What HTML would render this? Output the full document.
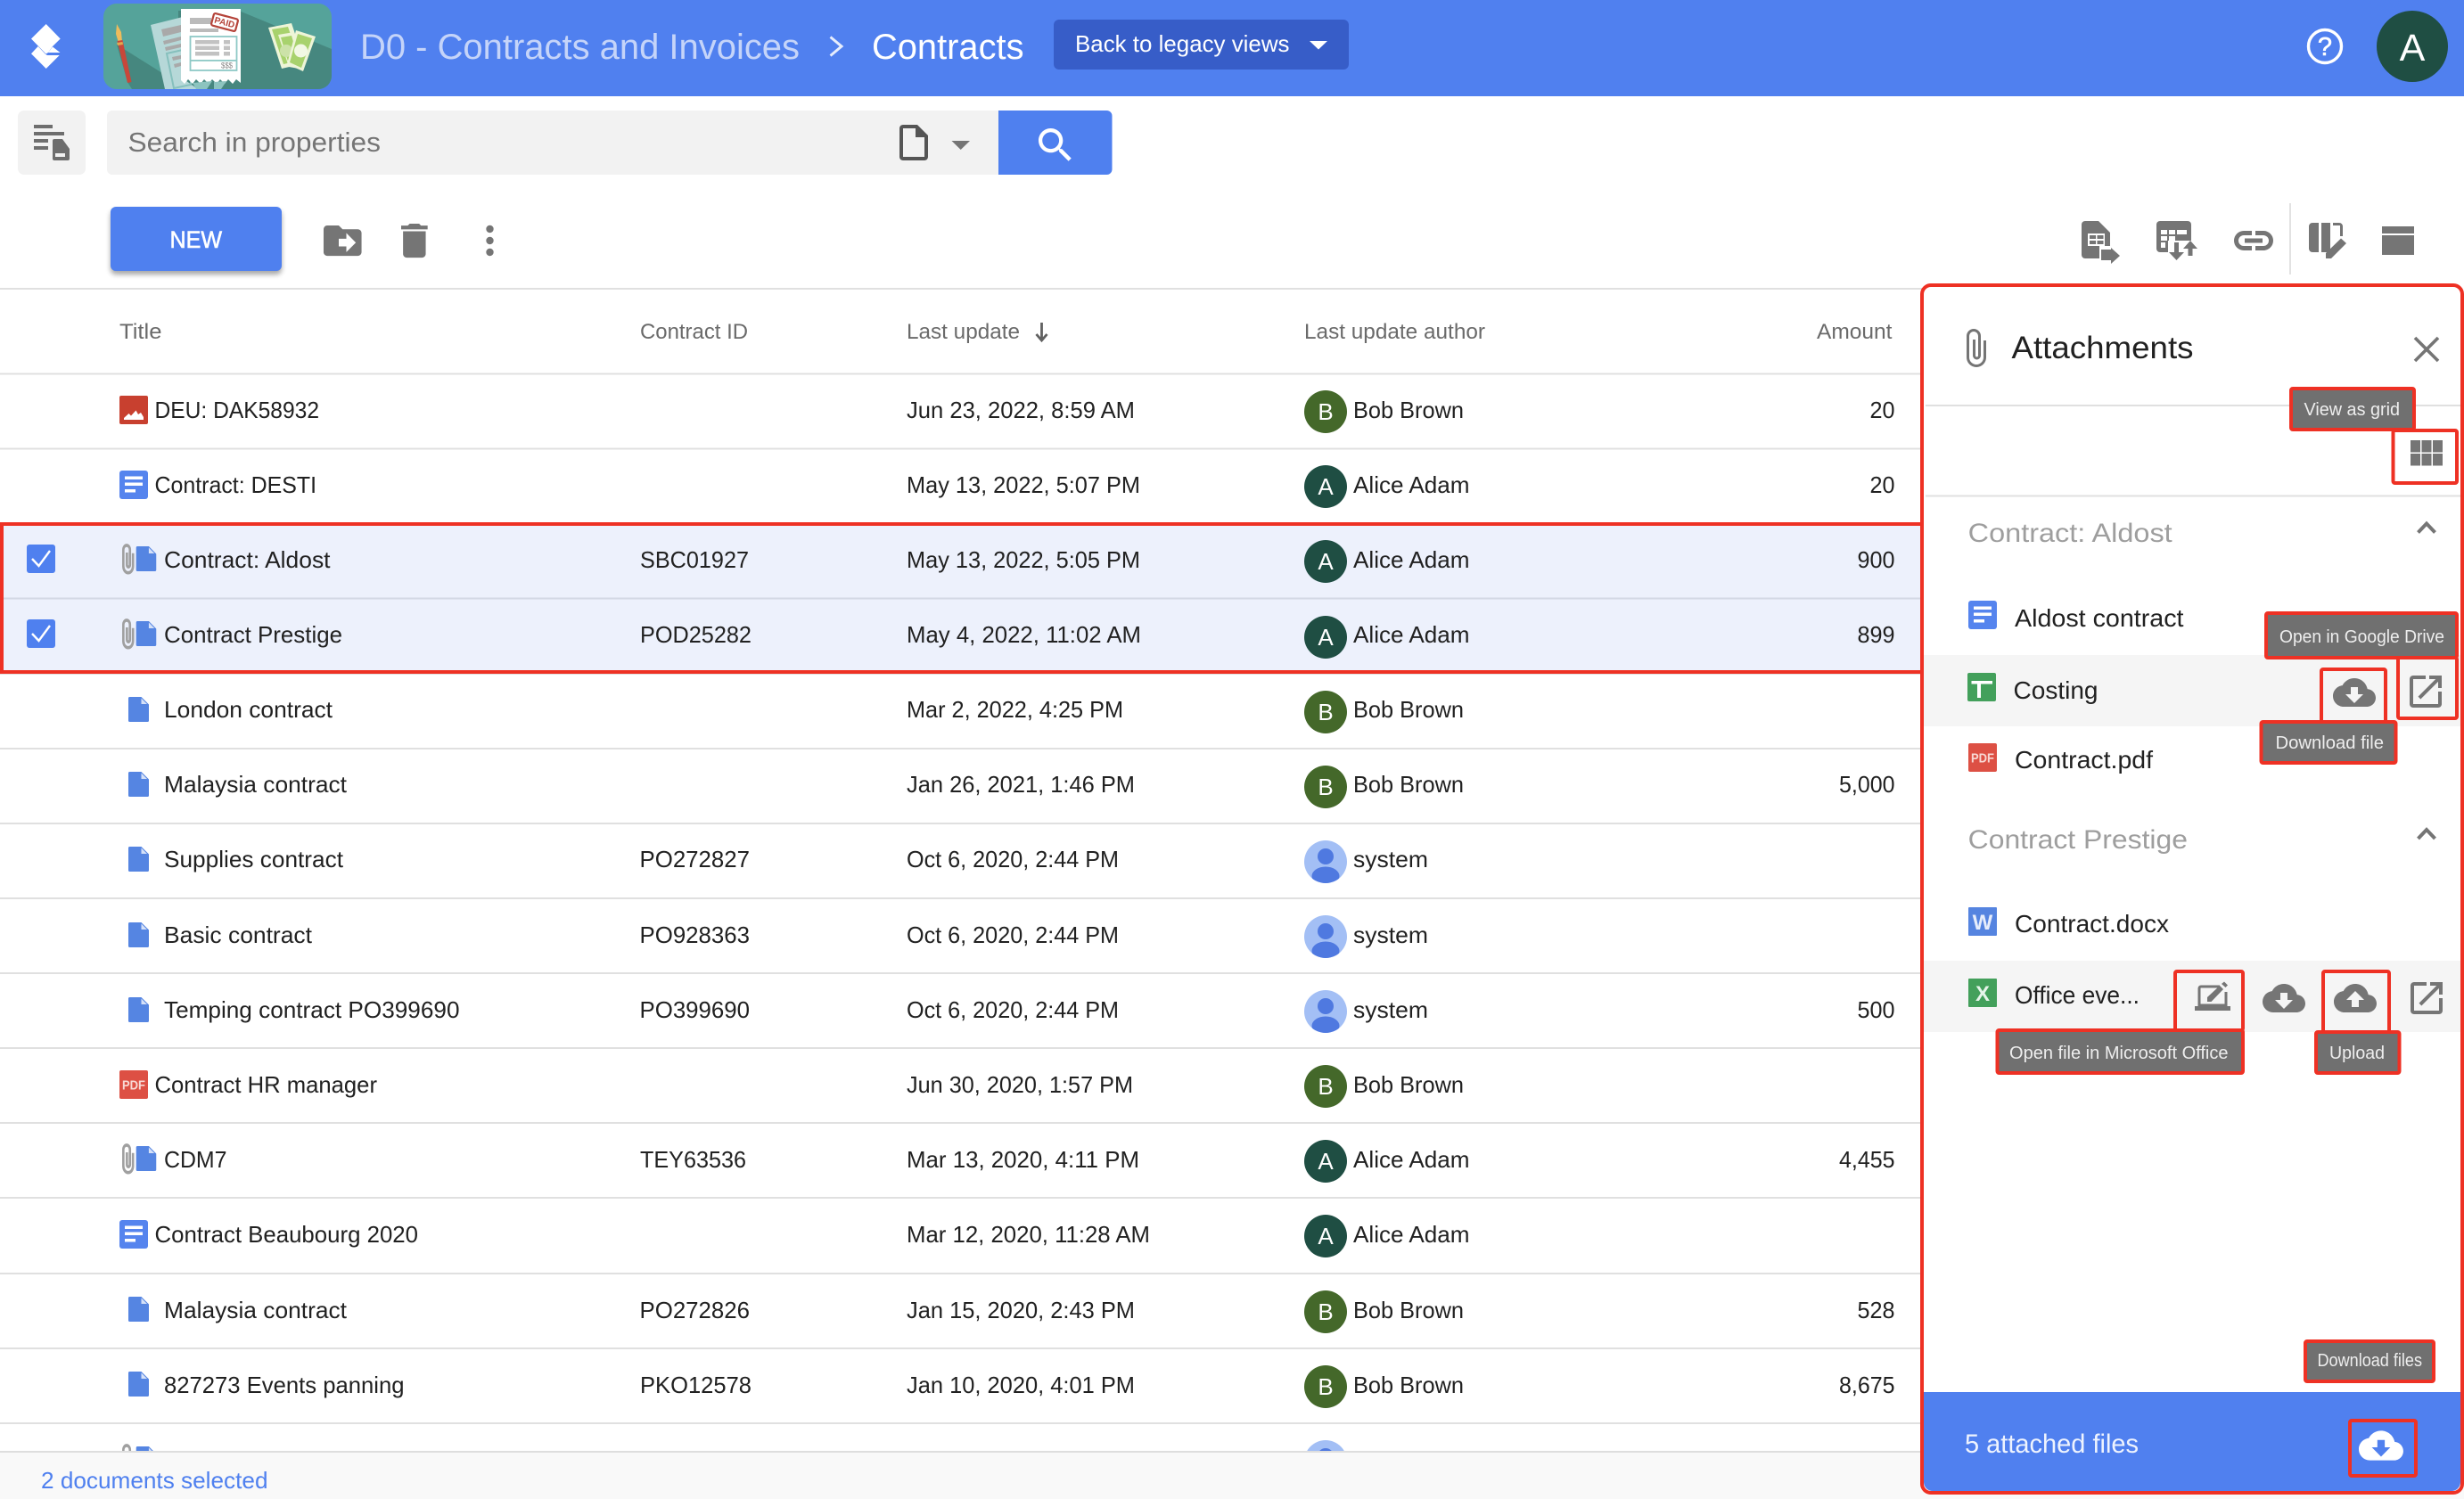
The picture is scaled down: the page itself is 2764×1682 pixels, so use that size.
<!DOCTYPE html>
<html lang="en">
<head>
<meta charset="utf-8">
<title>Contracts</title>
<style>
html,body{margin:0;padding:0;background:#fff;width:2764px;height:1682px;overflow:hidden}
svg{display:block;font-family:"Liberation Sans",Arial,sans-serif}
.t{font-size:26px;fill:#212121}
.h{font-size:24px;fill:#6a6a6a}
.av{font-size:26px;fill:#fff;text-anchor:middle}
.tt{font-size:20.5px;fill:#eee}
.p{font-size:28px;fill:#212121}
.g{font-size:30px;fill:#9e9e9e}
.rb{fill:none;stroke:#ee3124;stroke-width:4}
.tb{fill:#707070;stroke:#ee3124;stroke-width:4}
.ic{fill:#757575}
</style>
</head>
<body>
<svg width="2764" height="1682" viewBox="0 0 2764 1682" xmlns="http://www.w3.org/2000/svg">
<defs>
<filter id="bl" x="-10%" y="-20%" width="120%" height="150%"><feGaussianBlur stdDeviation="3"/></filter>
<clipPath id="lg"><rect x="116" y="4" width="256" height="96" rx="15"/></clipPath>
<clipPath id="sysc"><circle cx="24" cy="24" r="24"/></clipPath>
<g id="doc"><path d="M0 1.500a1.500 1.500 0 0 1 1.500-1.500H14.500L23 8.500V26.500a1.500 1.500 0 0 1-1.500 1.500H1.500A1.500 1.500 0 0 1 0 26.500z" fill="#5585e2"/><path d="M14.500 1.500V8H21z" fill="#d5e1f8"/></g>
<g id="clipdoc"><g transform="scale(.57 .77)"><path d="M20.500 14V33a9.500 9.500 0 0 1-19 0V9a6.500 6.500 0 0 1 13 0V31a3 3 0 0 1-6 0V13" fill="none" stroke="#a0a0a0" stroke-width="4.600"/></g><use href="#doc" x="14.500" y="3" transform="translate(1 0) scale(.98 1)"/></g>
<g id="gdoc"><rect width="32" height="32" rx="3" fill="#5584ee"/><rect x="6" y="6.500" width="20" height="3.500" fill="#fff"/><rect x="6" y="13.500" width="20" height="3.500" fill="#fff"/><rect x="6" y="21" width="12" height="3.500" fill="#fff"/></g>
<g id="sys"><circle cx="24" cy="24" r="24" fill="#a3bff5"/><g clip-path="url(#sysc)"><circle cx="24" cy="18" r="9" fill="#4f79e0"/><ellipse cx="24" cy="40" rx="15.500" ry="10.500" fill="#4f79e0"/></g></g>
<path id="cdl" d="M19.35 10.04C18.67 6.59 15.64 4 12 4 9.11 4 6.6 5.64 5.35 8.04 2.34 8.36 0 10.91 0 14c0 3.31 2.69 6 6 6h13c2.76 0 5-2.24 5-5 0-2.64-2.05-4.78-4.65-4.96zM17 13l-5 5-5-5h3V9h4v4h3z"/>
<path id="cul" d="M19.35 10.04C18.67 6.59 15.64 4 12 4 9.11 4 6.6 5.64 5.35 8.04 2.34 8.36 0 10.91 0 14c0 3.31 2.69 6 6 6h13c2.76 0 5-2.24 5-5 0-2.64-2.05-4.78-4.65-4.96zM14 13v4h-4v-4H7l5-5 5 5h-3z"/>
<path id="ext" d="M19 19H5V5h7V3H5c-1.11 0-2 .9-2 2v14c0 1.1.89 2 2 2h14c1.1 0 2-.9 2-2v-7h-2v7zM14 3v2h3.59l-9.83 9.83 1.41 1.41L19 6.41V10h2V3h-7z"/>
</defs>

<rect width="2764" height="1682" fill="#fff"/>

<!-- header -->
<rect width="2764" height="108" fill="#5080ef"/>
<path d="M51.700 27L67.700 43.500 59 52 54 59 51.500 60.500 35 43.500z" fill="#fff"/>
<path d="M59 52.500L67.500 59H54z" fill="#fff"/>
<path d="M42.700 52L51 60.800 53 62H66.700L51.700 77 35 60.300z" fill="#fff"/>

<g clip-path="url(#lg)">
<rect x="116" y="4" width="256" height="96" fill="#55a39a"/>
<path d="M268 12L372 55V100H200V12z" fill="#46877f"/>
<path d="M131 50L182 82 186 100H148L143 92z" fill="#46877f"/>
<path d="M169 28L205 19V88L222 100H185z" fill="#b6d8d8"/>
<path d="M181 33L203 28V36L183 41z" fill="#a9a9a9"/>
<path d="M183 46L203 41V45L184 50z" fill="#a9a9a9"/>
<path d="M185 53L203 49V53L186 57z" fill="#a9a9a9"/>
<path d="M187 60L214 54 214 95 195 99z" fill="none" stroke="#86c0bd" stroke-width="2"/>
<path d="M193 64L203 62V66L194 68zM195 72L203 70V74L196 76z" fill="#a9a9a9"/>
<path d="M203 10H270V93L265 89 261 94 256 89 252 94 247 89 243 94 238 89 234 94 229 89 225 94 220 89 216 94 211 89 207 94 203 90z" fill="#fff"/>
<path d="M216 93L238 91 232 100H220zM240 92L254 91 248 100H240z" fill="#8cc4bf"/>
<rect x="213" y="20" width="24" height="7" fill="#bbb"/>
<rect x="213" y="32" width="32" height="4" fill="#bbb"/>
<rect x="213.500" y="41" width="52" height="38" fill="none" stroke="#8ec9c6" stroke-width="1.800"/>
<rect x="213.500" y="67" width="52" height="1.800" fill="#8ec9c6"/>
<rect x="219" y="45" width="27" height="4.500" fill="#c2c2c2"/><rect x="219" y="51.500" width="27" height="4.500" fill="#c2c2c2"/><rect x="219" y="58" width="27" height="4.500" fill="#c2c2c2"/>
<rect x="251" y="45" width="7" height="4.500" fill="#c2c2c2"/><rect x="251" y="51.500" width="7" height="4.500" fill="#c2c2c2"/><rect x="251" y="58" width="7" height="4.500" fill="#c2c2c2"/>
<text x="248" y="76.500" font-size="9" fill="#888" textLength="13" lengthAdjust="spacingAndGlyphs">$$$</text>
<g transform="rotate(15 252 25)"><rect x="238" y="18" width="28" height="14" rx="2" fill="#fff" stroke="#b5443a" stroke-width="2.200"/><text x="252" y="28.500" font-size="10" font-weight="bold" fill="#b5443a" text-anchor="middle">PAID</text></g>
<path d="M131 27L136 36 137 47 133 48 130 38z" fill="#eebb5c"/>
<path d="M131.500 46L137.500 45 147.500 92 143 93z" fill="#c8473a"/>
<path d="M131 48L137.500 47 138 50 132 51z" fill="#e2a84e"/>
<path d="M301 31L327 26 342 71 316 77z" fill="#eef5d8"/>
<path d="M305 33L323 30 336 68 318 72z" fill="#a8d26d"/>
<path d="M312 39L330 36 341 78 324 75z" fill="#eef5d8"/>
<path d="M315 42L327 40 337 74 324 72z" fill="#a8d26d"/>
<circle cx="321" cy="57" r="7" fill="#cce2a8"/>
<path d="M332 34L354 41 340 80 322 72z" fill="#eef5d8"/>
<path d="M334 38L350 43 338 76 325 70z" fill="#a8d26d"/>
<circle cx="337.500" cy="57" r="7.500" fill="#f2f8e4"/>
</g>

<text x="404" y="66" font-size="40" fill="#c5d4f9" textLength="493" lengthAdjust="spacingAndGlyphs">D0 - Contracts and Invoices</text>
<path d="M931.500 41.500L944 52 931.500 62.500" fill="none" stroke="#e6edfc" stroke-width="3"/>
<text x="978" y="66" font-size="40" fill="#fff" textLength="170.500" lengthAdjust="spacingAndGlyphs">Contracts</text>
<rect x="1182" y="22" width="331" height="56" rx="6" fill="#375dc8"/>
<text x="1206" y="58" font-size="26" fill="#fff" textLength="240.500" lengthAdjust="spacingAndGlyphs">Back to legacy views</text>
<path d="M1469 46H1489L1479 55.500z" fill="#fff"/>
<circle cx="2608" cy="52" r="18.500" fill="none" stroke="#fff" stroke-width="3.400"/>
<text x="2608" y="62" font-size="29" fill="#fff" stroke="#fff" stroke-width=".6" text-anchor="middle">?</text>
<circle cx="2706" cy="52" r="40" fill="#1f4e43"/>
<text x="2706" y="68" font-size="43" fill="#fff" text-anchor="middle">A</text>

<!-- search row -->
<rect x="20" y="124" width="76" height="72" rx="7" fill="#f2f2f2"/>
<g fill="#6e6e6e">
<rect x="38" y="140" width="21" height="4"/><rect x="38" y="148" width="34" height="4"/><rect x="38" y="156" width="16" height="4"/><rect x="38" y="164" width="16" height="4"/>
<path d="M59 158a2 2 0 0 1 2-2H70L78 167V178a2 2 0 0 1-2 2H61a2 2 0 0 1-2-2z"/>
</g>
<rect x="62" y="172" width="11" height="4" fill="#f2f2f2"/>
<path d="M126 124H1120V196H126a6 6 0 0 1-6-6V130a6 6 0 0 1 6-6z" fill="#f2f2f2"/>
<text x="143.500" y="170" font-size="31" fill="#757575" textLength="283.500" lengthAdjust="spacingAndGlyphs">Search in properties</text>
<path transform="translate(1001 136) scale(2)" fill="#555" d="M14 2H6c-1.100 0-1.990.9-1.990 2L4 20c0 1.100.89 2 1.990 2H18c1.100 0 2-.9 2-2V8l-6-6zm4 18H6V4h7v5h5v11z"/>
<path d="M1067.500 158H1088L1077.700 168z" fill="#757575"/>
<path d="M1120 124H1241.500a6 6 0 0 1 6 6V190a6 6 0 0 1-6 6H1120z" fill="#4f80ef"/>
<path transform="translate(1158.700 137.700) scale(2.100)" fill="#fff" d="M15.500 14h-.79l-.28-.27C15.410 12.590 16 11.110 16 9.500 16 5.910 13.090 3 9.500 3S3 5.910 3 9.500 5.910 16 9.500 16c1.610 0 3.090-.59 4.230-1.570l.27.28v.79l5 4.990L20.490 19l-4.990-5zm-6 0C7.010 14 5 11.990 5 9.500S7.010 5 9.500 5 14 7.010 14 9.500 11.990 14 9.500 14z"/>

<!-- toolbar -->
<rect x="124" y="236" width="192" height="72" rx="6" fill="#000" opacity=".35" filter="url(#bl)"/>
<rect x="124" y="232" width="192" height="72" rx="6" fill="#4f80ef"/>
<text x="190.500" y="278" font-size="27" fill="#fff" stroke="#fff" stroke-width=".6" textLength="58.500" lengthAdjust="spacingAndGlyphs">NEW</text>
<path class="ic" transform="translate(358.700 244.500) scale(2.130)" d="M20 6h-8l-2-2H4c-1.100 0-1.990.9-1.990 2L2 18c0 1.100.9 2 2 2h16c1.100 0 2-.9 2-2V8c0-1.100-.9-2-2-2zm-6 12v-3h-4v-4h4V8l5 5-5 5z"/>
<path class="ic" transform="translate(439.400 244.600) scale(2.120)" d="M6 19c0 1.100.9 2 2 2h8c1.100 0 2-.9 2-2V7H6v12zM19 4h-3.500l-1-1h-5l-1 1H5v2h14V4z"/>
<circle class="ic" cx="549.500" cy="257" r="4.200"/><circle class="ic" cx="549.500" cy="270" r="4.200"/><circle class="ic" cx="549.500" cy="283" r="4.200"/>

<!-- right toolbar -->
<path class="ic" d="M2335 252a4 4 0 0 1 4-4H2354L2367 261V286a4 4 0 0 1-4 4H2339a4 4 0 0 1-4-4z"/>
<rect x="2342" y="262" width="19" height="14" fill="#fff"/>
<path class="ic" d="M2344 264h7v4h-7zM2352.500 264h7v4h-7zM2344 270h7v4h-7zM2352.500 270h7v4h-7z"/>
<path d="M2355 276H2367V272L2380 287 2367 298V292H2355z" fill="#fff"/>
<path class="ic" d="M2357 280H2368V278L2378 287 2368 296V292H2357z"/>
<rect class="ic" x="2419" y="248" width="39" height="35" rx="4"/>
<path fill="#fff" d="M2424 258h7v5h-7zM2433 258h7v5h-7zM2442 258h11v5h-11zM2424 265h7v5h-7zM2433 265h7v5h-7zM2424 272h5v6h-5z"/>
<path d="M2432 270H2468V292H2432z" fill="#fff"/>
<path class="ic" d="M2439 272H2444V283H2450L2441.500 292 2433 283H2439zM2449 279L2457 270 2465 279H2459.500V287H2454.500V279z"/>
<path class="ic" d="M2517 259H2526V264H2517a6 6 0 0 0 0 12H2526V281H2517a11 11 0 0 1 0-22zM2530 259H2539a11 11 0 0 1 0 22H2530V276H2539a6 6 0 0 0 0-12H2530zM2518 267.500H2538V272.500H2518z"/>
<rect x="2568" y="228" width="2" height="80" fill="#e2e2e2"/>
<path class="ic" d="M2594 250H2601V283H2594a4 4 0 0 1-4-4V254a4 4 0 0 1 4-4zM2604 250H2614V283H2604zM2617 250H2624a4 4 0 0 1 4 4V265H2625V253H2617z"/>
<path class="ic" d="M2609 284L2626 267.500 2632 273 2615 290H2609z"/>
<rect class="ic" x="2672" y="254" width="36" height="32"/>
<rect x="2672" y="262" width="36" height="2" fill="#fff"/>

<rect x="0" y="323" width="2160" height="2" fill="#e0e0e0"/>

<!-- table header -->
<text class="h" x="134" y="380" textLength="47.500" lengthAdjust="spacingAndGlyphs">Title</text>
<text class="h" x="718" y="380" textLength="121" lengthAdjust="spacingAndGlyphs">Contract ID</text>
<text class="h" x="1017" y="380" textLength="127" lengthAdjust="spacingAndGlyphs">Last update</text>
<path d="M1168.500 362V381M1162.500 375L1168.500 382 1174.500 375" fill="none" stroke="#616161" stroke-width="2.800"/>
<text class="h" x="1463" y="380" textLength="203" lengthAdjust="spacingAndGlyphs">Last update author</text>
<text class="h" x="2038" y="380" textLength="84.500" lengthAdjust="spacingAndGlyphs">Amount</text>

<!-- selection background -->
<rect x="0" y="588" width="2156" height="166" fill="#edf1fc"/>

<!-- row lines -->
<g fill="#e0e0e0">
<rect y="418.500" width="2156" height="2"/><rect y="502.500" width="2156" height="2"/><rect y="755" width="2156" height="2"/><rect y="839" width="2156" height="2"/><rect y="923" width="2156" height="2"/><rect y="1007" width="2156" height="2"/><rect y="1091" width="2156" height="2"/><rect y="1175" width="2156" height="2"/><rect y="1259" width="2156" height="2"/><rect y="1343" width="2156" height="2"/><rect y="1428" width="2156" height="2"/><rect y="1512" width="2156" height="2"/><rect y="1596" width="2156" height="2"/>
</g>
<rect y="670.500" width="2156" height="2" fill="#d3d8e4"/>

<!-- row 0 -->
<rect x="134" y="444" width="32" height="32" rx="2" fill="#c8402f"/>
<path transform="translate(134 444)" d="M5 27V25L10.500 20 13 22.500 18.500 16.500 21 21 24 19 27 24V27z" fill="#fff"/>
<text class="t" x="173.500" y="469" textLength="184.500" lengthAdjust="spacingAndGlyphs">DEU: DAK58932</text>
<text class="t" x="1017" y="469" textLength="256" lengthAdjust="spacingAndGlyphs">Jun 23, 2022, 8:59 AM</text>
<circle cx="1487" cy="462" r="24" fill="#44682a"/><text class="av" x="1487" y="471">B</text>
<text class="t" x="1518" y="469" textLength="124" lengthAdjust="spacingAndGlyphs">Bob Brown</text>
<text class="t" x="2097.500" y="469" textLength="28" lengthAdjust="spacingAndGlyphs">20</text>

<!-- row 1 -->
<use href="#gdoc" x="134" y="528"/>
<text class="t" x="173.500" y="553" textLength="181.500" lengthAdjust="spacingAndGlyphs">Contract: DESTI</text>
<text class="t" x="1017" y="553" textLength="262" lengthAdjust="spacingAndGlyphs">May 13, 2022, 5:07 PM</text>
<circle cx="1487" cy="546" r="24" fill="#1f4e43"/><text class="av" x="1487" y="555">A</text>
<text class="t" x="1518" y="553" textLength="130.500" lengthAdjust="spacingAndGlyphs">Alice Adam</text>
<text class="t" x="2097.500" y="553" textLength="28" lengthAdjust="spacingAndGlyphs">20</text>

<!-- row 2 -->
<rect x="30" y="611" width="32" height="32" rx="3" fill="#4f80ef"/>
<path d="M36 627L43.500 635 56 618" fill="none" stroke="#fff" stroke-width="2.400"/>
<use href="#clipdoc" x="137.500" y="610"/>
<text class="t" x="184" y="637" textLength="186.500" lengthAdjust="spacingAndGlyphs">Contract: Aldost</text>
<text class="t" x="718" y="637" textLength="122" lengthAdjust="spacingAndGlyphs">SBC01927</text>
<text class="t" x="1017" y="637" textLength="262" lengthAdjust="spacingAndGlyphs">May 13, 2022, 5:05 PM</text>
<circle cx="1487" cy="630" r="24" fill="#1f4e43"/><text class="av" x="1487" y="639">A</text>
<text class="t" x="1518" y="637" textLength="130.500" lengthAdjust="spacingAndGlyphs">Alice Adam</text>
<text class="t" x="2083.500" y="637" textLength="42" lengthAdjust="spacingAndGlyphs">900</text>

<!-- row 3 -->
<rect x="30" y="695" width="32" height="32" rx="3" fill="#4f80ef"/>
<path d="M36 711L43.500 719 56 702" fill="none" stroke="#fff" stroke-width="2.400"/>
<use href="#clipdoc" x="137.500" y="694"/>
<text class="t" x="184" y="721" textLength="200" lengthAdjust="spacingAndGlyphs">Contract Prestige</text>
<text class="t" x="718" y="721" textLength="125" lengthAdjust="spacingAndGlyphs">POD25282</text>
<text class="t" x="1017" y="721" textLength="263" lengthAdjust="spacingAndGlyphs">May 4, 2022, 11:02 AM</text>
<circle cx="1487" cy="715" r="24" fill="#1f4e43"/><text class="av" x="1487" y="724">A</text>
<text class="t" x="1518" y="721" textLength="130.500" lengthAdjust="spacingAndGlyphs">Alice Adam</text>
<text class="t" x="2083.500" y="721" textLength="42" lengthAdjust="spacingAndGlyphs">899</text>

<!-- row 4 -->
<use href="#doc" x="144" y="782"/>
<text class="t" x="184" y="805" textLength="189" lengthAdjust="spacingAndGlyphs">London contract</text>
<text class="t" x="1017" y="805" textLength="243" lengthAdjust="spacingAndGlyphs">Mar 2, 2022, 4:25 PM</text>
<circle cx="1487" cy="799" r="24" fill="#44682a"/><text class="av" x="1487" y="808">B</text>
<text class="t" x="1518" y="805" textLength="124" lengthAdjust="spacingAndGlyphs">Bob Brown</text>

<!-- row 5 -->
<use href="#doc" x="144" y="866"/>
<text class="t" x="184" y="889" textLength="205" lengthAdjust="spacingAndGlyphs">Malaysia contract</text>
<text class="t" x="1017" y="889" textLength="256" lengthAdjust="spacingAndGlyphs">Jan 26, 2021, 1:46 PM</text>
<circle cx="1487" cy="883" r="24" fill="#44682a"/><text class="av" x="1487" y="892">B</text>
<text class="t" x="1518" y="889" textLength="124" lengthAdjust="spacingAndGlyphs">Bob Brown</text>
<text class="t" x="2063" y="889" textLength="62.500" lengthAdjust="spacingAndGlyphs">5,000</text>

<!-- row 6 -->
<use href="#doc" x="144" y="950"/>
<text class="t" x="184" y="973" textLength="201" lengthAdjust="spacingAndGlyphs">Supplies contract</text>
<text class="t" x="717.500" y="973" textLength="123.500" lengthAdjust="spacingAndGlyphs">PO272827</text>
<text class="t" x="1017" y="973" textLength="238" lengthAdjust="spacingAndGlyphs">Oct 6, 2020, 2:44 PM</text>
<use href="#sys" x="1463" y="943"/>
<text class="t" x="1518" y="973" textLength="84" lengthAdjust="spacingAndGlyphs">system</text>

<!-- row 7 -->
<use href="#doc" x="144" y="1035"/>
<text class="t" x="184" y="1058" textLength="166" lengthAdjust="spacingAndGlyphs">Basic contract</text>
<text class="t" x="717.500" y="1058" textLength="123.500" lengthAdjust="spacingAndGlyphs">PO928363</text>
<text class="t" x="1017" y="1058" textLength="238" lengthAdjust="spacingAndGlyphs">Oct 6, 2020, 2:44 PM</text>
<use href="#sys" x="1463" y="1027"/>
<text class="t" x="1518" y="1058" textLength="84" lengthAdjust="spacingAndGlyphs">system</text>

<!-- row 8 -->
<use href="#doc" x="144" y="1119"/>
<text class="t" x="184" y="1142" textLength="331.500" lengthAdjust="spacingAndGlyphs">Temping contract PO399690</text>
<text class="t" x="717.500" y="1142" textLength="123.500" lengthAdjust="spacingAndGlyphs">PO399690</text>
<text class="t" x="1017" y="1142" textLength="238" lengthAdjust="spacingAndGlyphs">Oct 6, 2020, 2:44 PM</text>
<use href="#sys" x="1463" y="1111"/>
<text class="t" x="1518" y="1142" textLength="84" lengthAdjust="spacingAndGlyphs">system</text>
<text class="t" x="2083.500" y="1142" textLength="42" lengthAdjust="spacingAndGlyphs">500</text>

<!-- row 9 -->
<rect x="134" y="1201" width="32" height="32" rx="2" fill="#dd5044"/>
<text x="150" y="1222.500" font-size="15" font-weight="bold" fill="#f8d8d4" text-anchor="middle" textLength="26" lengthAdjust="spacingAndGlyphs">PDF</text>
<text class="t" x="173.500" y="1226" textLength="249.500" lengthAdjust="spacingAndGlyphs">Contract HR manager</text>
<text class="t" x="1017" y="1226" textLength="254" lengthAdjust="spacingAndGlyphs">Jun 30, 2020, 1:57 PM</text>
<circle cx="1487" cy="1219" r="24" fill="#44682a"/><text class="av" x="1487" y="1228">B</text>
<text class="t" x="1518" y="1226" textLength="124" lengthAdjust="spacingAndGlyphs">Bob Brown</text>

<!-- row 10 -->
<use href="#clipdoc" x="137.500" y="1283"/>
<text class="t" x="184" y="1310" textLength="70.500" lengthAdjust="spacingAndGlyphs">CDM7</text>
<text class="t" x="718" y="1310" textLength="119" lengthAdjust="spacingAndGlyphs">TEY63536</text>
<text class="t" x="1017" y="1310" textLength="261" lengthAdjust="spacingAndGlyphs">Mar 13, 2020, 4:11 PM</text>
<circle cx="1487" cy="1303" r="24" fill="#1f4e43"/><text class="av" x="1487" y="1312">A</text>
<text class="t" x="1518" y="1310" textLength="130.500" lengthAdjust="spacingAndGlyphs">Alice Adam</text>
<text class="t" x="2063" y="1310" textLength="62.500" lengthAdjust="spacingAndGlyphs">4,455</text>

<!-- row 11 -->
<use href="#gdoc" x="134" y="1369"/>
<text class="t" x="173.500" y="1394" textLength="295.500" lengthAdjust="spacingAndGlyphs">Contract Beaubourg 2020</text>
<text class="t" x="1017" y="1394" textLength="273" lengthAdjust="spacingAndGlyphs">Mar 12, 2020, 11:28 AM</text>
<circle cx="1487" cy="1387" r="24" fill="#1f4e43"/><text class="av" x="1487" y="1396">A</text>
<text class="t" x="1518" y="1394" textLength="130.500" lengthAdjust="spacingAndGlyphs">Alice Adam</text>

<!-- row 12 -->
<use href="#doc" x="144" y="1455"/>
<text class="t" x="184" y="1479" textLength="205" lengthAdjust="spacingAndGlyphs">Malaysia contract</text>
<text class="t" x="717.500" y="1479" textLength="123.500" lengthAdjust="spacingAndGlyphs">PO272826</text>
<text class="t" x="1017" y="1479" textLength="256" lengthAdjust="spacingAndGlyphs">Jan 15, 2020, 2:43 PM</text>
<circle cx="1487" cy="1472" r="24" fill="#44682a"/><text class="av" x="1487" y="1481">B</text>
<text class="t" x="1518" y="1479" textLength="124" lengthAdjust="spacingAndGlyphs">Bob Brown</text>
<text class="t" x="2083.500" y="1479" textLength="42" lengthAdjust="spacingAndGlyphs">528</text>

<!-- row 13 -->
<use href="#doc" x="144" y="1539"/>
<text class="t" x="184" y="1563" textLength="269.500" lengthAdjust="spacingAndGlyphs">827273 Events panning</text>
<text class="t" x="718" y="1563" textLength="125" lengthAdjust="spacingAndGlyphs">PKO12578</text>
<text class="t" x="1017" y="1563" textLength="256" lengthAdjust="spacingAndGlyphs">Jan 10, 2020, 4:01 PM</text>
<circle cx="1487" cy="1556" r="24" fill="#44682a"/><text class="av" x="1487" y="1565">B</text>
<text class="t" x="1518" y="1563" textLength="124" lengthAdjust="spacingAndGlyphs">Bob Brown</text>
<text class="t" x="2063" y="1563" textLength="62.500" lengthAdjust="spacingAndGlyphs">8,675</text>

<!-- row 14 partial -->
<use href="#clipdoc" x="137.500" y="1620"/>
<use href="#sys" x="1463" y="1616"/>

<!-- bottom status -->
<rect y="1629" width="2764" height="53" fill="#f9f9f9"/>
<rect y="1628" width="2764" height="2" fill="#dedede"/>
<text x="46" y="1670" font-size="26" fill="#4f80ef" textLength="254.500" lengthAdjust="spacingAndGlyphs">2 documents selected</text>

<!-- selection outline -->
<rect class="rb" x="2" y="588" width="2154" height="166"/>

<!-- panel -->
<rect x="2156" y="320" width="606" height="1355" rx="10" fill="#fff"/>
<path d="M2158 1562H2760V1663a10 10 0 0 1-10 10H2168a10 10 0 0 1-10-10z" fill="#5080ef"/>
<rect class="rb" x="2156" y="320" width="606" height="1355" rx="10"/>

<path transform="translate(2206 368)" d="M20.500 14V33a9.500 9.500 0 0 1-19 0V9a6.500 6.500 0 0 1 13 0V31a3 3 0 0 1-6 0V13" fill="none" stroke="#757575" stroke-width="3"/>
<text x="2256.500" y="402" font-size="35" fill="#212121" textLength="204" lengthAdjust="spacingAndGlyphs">Attachments</text>
<path d="M2709 379L2735 405M2735 379L2709 405" stroke="#757575" stroke-width="3.600" fill="none"/>
<rect x="2160" y="454" width="600" height="2" fill="#e0e0e0"/>
<rect x="2160" y="555.500" width="600" height="2" fill="#e0e0e0"/>

<!-- grid icon -->
<rect class="rb" x="2684.500" y="483" width="71.500" height="59" rx="2"/>
<g class="ic"><rect x="2704" y="494" width="11" height="13.500"/><rect x="2716.500" y="494" width="11" height="13.500"/><rect x="2729" y="494" width="11" height="13.500"/><rect x="2704" y="509" width="11" height="13.500"/><rect x="2716.500" y="509" width="11" height="13.500"/><rect x="2729" y="509" width="11" height="13.500"/></g>
<rect class="tb" x="2570" y="436" width="138" height="46" rx="2"/>
<text class="tt" x="2584.500" y="466" textLength="107.500" lengthAdjust="spacingAndGlyphs">View as grid</text>

<!-- group 1 -->
<text class="g" x="2207.700" y="608" textLength="229" lengthAdjust="spacingAndGlyphs">Contract: Aldost</text>
<path d="M2712.500 597.500L2722 587.500 2731.500 597.500" fill="none" stroke="#757575" stroke-width="4"/>
<use href="#gdoc" transform="translate(2208 674)"/>
<text class="p" x="2260" y="703" textLength="189.500" lengthAdjust="spacingAndGlyphs">Aldost contract</text>
<rect x="2158" y="735" width="602" height="80" fill="#f5f5f5"/>
<rect x="2207" y="755" width="32" height="32" rx="2" fill="#43a05b"/>
<path d="M2211.500 764H2235V767.500H2222V783H2218V767.500H2211.500z" fill="#fff"/>
<text class="p" x="2258.500" y="784" textLength="95" lengthAdjust="spacingAndGlyphs">Costing</text>
<rect x="2208" y="834" width="32" height="32" rx="2" fill="#dd5044"/>
<text x="2224" y="855.500" font-size="15" font-weight="bold" fill="#f8d8d4" text-anchor="middle" textLength="26" lengthAdjust="spacingAndGlyphs">PDF</text>
<text class="p" x="2260" y="862" textLength="155" lengthAdjust="spacingAndGlyphs">Contract.pdf</text>

<use href="#cdl" class="ic" transform="translate(2617 753) scale(2)"/>
<rect class="rb" x="2604" y="751" width="72" height="60" rx="2"/>
<use href="#ext" class="ic" transform="translate(2697 752) scale(2)"/>
<rect class="rb" x="2690" y="738" width="66" height="68" rx="2"/>
<rect class="tb" x="2542" y="688" width="214" height="50" rx="2"/>
<text class="tt" x="2557" y="721" textLength="185" lengthAdjust="spacingAndGlyphs">Open in Google Drive</text>
<rect class="tb" x="2536.500" y="810" width="151" height="46" rx="2"/>
<text class="tt" x="2552.500" y="840" textLength="121.500" lengthAdjust="spacingAndGlyphs">Download file</text>

<!-- group 2 -->
<text class="g" x="2207.700" y="952" textLength="246.300" lengthAdjust="spacingAndGlyphs">Contract Prestige</text>
<path d="M2712.500 941L2722 931 2731.500 941" fill="none" stroke="#757575" stroke-width="4"/>
<rect x="2208" y="1018" width="32" height="32" rx="1" fill="#5584e0"/>
<text x="2224" y="1043" font-size="24" font-weight="bold" fill="#e6edfb" text-anchor="middle">W</text>
<text class="p" x="2260" y="1046" textLength="173" lengthAdjust="spacingAndGlyphs">Contract.docx</text>
<rect x="2158" y="1078" width="602" height="80" fill="#f5f5f5"/>
<rect x="2208" y="1098" width="32" height="32" rx="1" fill="#43a05b"/>
<text x="2224" y="1123" font-size="24" font-weight="bold" fill="#e6f4ea" text-anchor="middle">X</text>
<text class="p" x="2260" y="1126" textLength="140" lengthAdjust="spacingAndGlyphs">Office eve...</text>

<path d="M2490 1107H2469a2 2 0 0 0-2 2V1128H2497V1113" fill="none" stroke="#757575" stroke-width="3"/>
<path d="M2476 1124V1119L2490 1106 2494 1110 2480.500 1124z" fill="#757575"/>
<path d="M2492 1104L2495 1101.500 2499 1105.500 2496.500 1108z" fill="#757575"/>
<rect x="2462" y="1129" width="40" height="5" fill="#757575"/>
<use href="#cdl" class="ic" transform="translate(2538 1096) scale(2)"/>
<use href="#cul" class="ic" transform="translate(2618 1096) scale(2)"/>
<use href="#ext" class="ic" transform="translate(2698 1096) scale(2)"/>
<rect class="rb" x="2440" y="1090" width="76" height="66" rx="2"/>
<rect class="rb" x="2606" y="1090" width="74" height="68" rx="2"/>
<rect class="tb" x="2240.500" y="1156" width="275.500" height="48" rx="2"/>
<text class="tt" x="2254" y="1188" textLength="245.500" lengthAdjust="spacingAndGlyphs">Open file in Microsoft Office</text>
<rect class="tb" x="2598" y="1158" width="93.500" height="46" rx="2"/>
<text class="tt" x="2613" y="1188" textLength="62" lengthAdjust="spacingAndGlyphs">Upload</text>

<!-- panel footer -->
<rect class="tb" x="2586" y="1505" width="144" height="45" rx="2"/>
<text class="tt" x="2599.500" y="1533" textLength="117.500" lengthAdjust="spacingAndGlyphs">Download files</text>
<text x="2204" y="1630" font-size="30" fill="#eef3fe" textLength="195" lengthAdjust="spacingAndGlyphs">5 attached files</text>
<use href="#cdl" fill="#fff" transform="translate(2646 1597) scale(2.080)"/>
<rect class="rb" x="2636" y="1594" width="74" height="62" rx="2"/>
</svg>
</body>
</html>
